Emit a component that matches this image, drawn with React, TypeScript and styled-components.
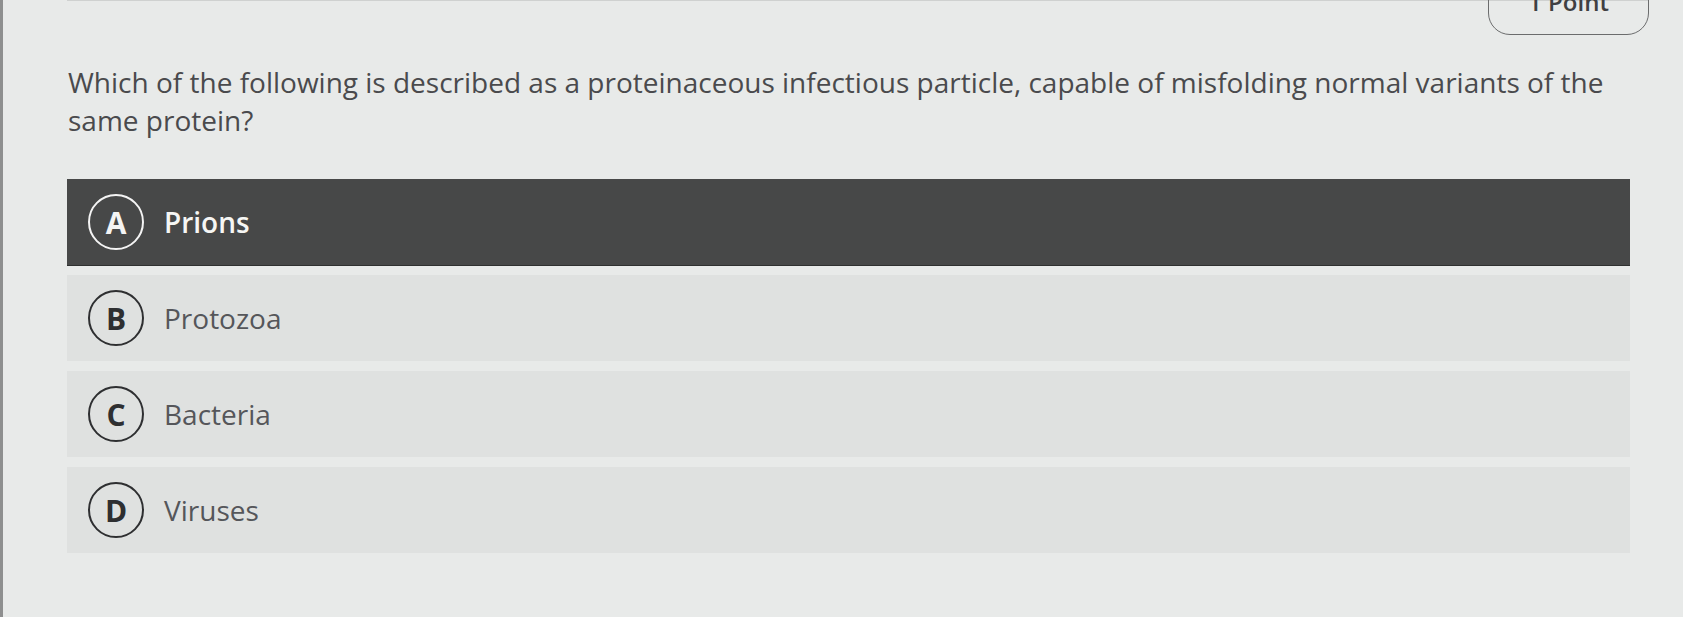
import * as React from 'react'
import styled, { createGlobalStyle } from 'styled-components'

type Choice = {
    letter: string
    label: string
}

const choices: Choice[] = [
    { letter: 'A', label: 'Prions' },
    { letter: 'B', label: 'Protozoa' },
    { letter: 'C', label: 'Bacteria' },
    { letter: 'D', label: 'Viruses' },
]

const GlobalStyle = createGlobalStyle`
    html, body {
        margin: 0;
        background-color: #e8eae9;
    }
    body {
        font-family: "Open Sans", "Noto Sans", Arial, sans-serif;
        overflow: hidden;
    }
`

const Page = styled.main`
    box-sizing: border-box;
    min-height: 617px;
    border-left: 3px solid #8e8f8f;
    padding: 0 34px 0 64px;
`
const Header = styled.header`
    display: flex;
    justify-content: flex-end;
    height: 35px;
    border-top: 1px solid #cfd1d0;
`
const PointBadge = styled.div`
    box-sizing: border-box;
    display: flex;
    align-items: center;
    justify-content: center;
    width: 161px;
    height: 68px;
    margin-top: -34px;
    border: 1.5px solid #6b6c6d;
    border-radius: 22px;
    color: #3f4042;
    font-size: 24px;
    font-weight: 600;
`
const Content = styled.section`
    margin-right: 19px;
`
const Question = styled.p`
    margin: 27px 0 0 1px;
    color: #4a4a4d;
    font-size: 28px;
    line-height: 38px;
`
const Options = styled.ul`
    display: flex;
    flex-direction: column;
    gap: 10px;
    margin: 40px 0 0;
    padding: 0;
    list-style: none;
`
const Option = styled.li<{ $selected: boolean }>`
    display: flex;
    align-items: center;
    gap: 20px;
    height: 86px;
    padding-left: 21px;
    background-color: ${p => (p.$selected ? '#474848' : '#dfe1e0')};
    box-shadow: ${p => (p.$selected ? '0 1px 0 #2f3030' : 'none')};
`
const Letter = styled.span<{ $selected: boolean }>`
    box-sizing: border-box;
    display: flex;
    align-items: center;
    justify-content: center;
    flex-shrink: 0;
    width: 56px;
    height: 56px;
    border: 2.5px solid ${p => (p.$selected ? '#f4f4f4' : '#2e2f31')};
    border-radius: 50%;
    color: ${p => (p.$selected ? '#f4f4f4' : '#2e2f31')};
    font-size: 30px;
    font-weight: 700;
`
const Label = styled.span<{ $selected: boolean }>`
    color: ${p => (p.$selected ? '#f6f6f4' : '#55565a')};
    font-size: 28px;
    font-weight: ${p => (p.$selected ? 600 : 400)};
`

const App = () => {
    const selected = 'A'
    return (
        <>
            <GlobalStyle />
            <Page>
                <Header>
                    <PointBadge>1 Point</PointBadge>
                </Header>
                <Content>
                    <Question>
                        Which of the following is described as a proteinaceous infectious particle, capable of
                        misfolding normal variants of the same protein?
                    </Question>
                    <Options>
                        {choices.map(c => (
                            <Option key={c.letter} $selected={c.letter === selected}>
                                <Letter $selected={c.letter === selected}>{c.letter}</Letter>
                                <Label $selected={c.letter === selected}>{c.label}</Label>
                            </Option>
                        ))}
                    </Options>
                </Content>
            </Page>
        </>
    )
}

export default App
